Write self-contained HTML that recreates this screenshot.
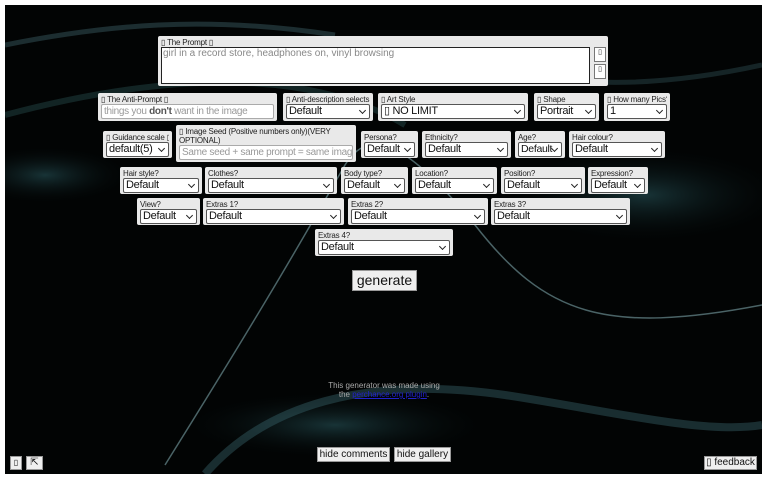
<!DOCTYPE html>
<html><head><meta charset="utf-8"><style>
*{box-sizing:border-box;margin:0;padding:0}
html,body{width:768px;height:480px;background:#fff;overflow:hidden;font-family:"Liberation Sans",sans-serif}
#bg{position:absolute;left:5px;top:5px;width:757px;height:469px;background:#020404;overflow:hidden}
.p{position:absolute;background:#e9e9e9;border-radius:2px;font-size:8px;color:#222;padding:2px 3px}
.p .l{line-height:9px;white-space:nowrap;overflow:hidden;letter-spacing:-0.2px}
.s{display:block;background:#fff;border:1px solid #555;border-radius:2px;height:15px;font-size:11px;line-height:13px;padding:0 2px;position:relative;color:#111;white-space:nowrap;overflow:hidden;letter-spacing:-0.3px}
.s:after{content:"";position:absolute;right:4px;top:3px;width:4px;height:4px;border-right:1.5px solid #222;border-bottom:1.5px solid #222;transform:rotate(45deg);background:#fff}
.s.i:after{display:none}
.b{position:absolute;background:#efefef;border:1px solid #999;font-size:10px;color:#111;text-align:center}
</style></head><body>
<div id="bg">
<svg width="757" height="469" style="position:absolute;left:0;top:0">
<defs>
<radialGradient id="g1" cx="0.5" cy="0.5" r="0.5"><stop offset="0" stop-color="#2a5a60" stop-opacity=".55"/><stop offset="1" stop-color="#000" stop-opacity="0"/></radialGradient>
</defs>
<ellipse cx="640" cy="190" rx="150" ry="50" fill="url(#g1)"/>
<ellipse cx="40" cy="170" rx="90" ry="30" fill="url(#g1)"/>
<ellipse cx="330" cy="420" rx="160" ry="35" fill="url(#g1)"/>
<path d="M160 460 C260 300 300 230 340 160 C370 110 420 160 470 220 C540 310 600 330 757 300" stroke="#6a8c90" stroke-width="1.5" fill="none" opacity=".7"/>
<path d="M0 40 C100 20 200 10 330 30" stroke="#3c6066" stroke-width="5" fill="none" opacity=".45"/>
<path d="M200 469 C260 400 360 370 500 390 C600 405 700 430 757 420" stroke="#3d6c72" stroke-width="8" fill="none" opacity=".4"/>
<path d="M0 110 C150 70 300 60 400 120" stroke="#244" stroke-width="6" fill="none" opacity=".5"/>
<path d="M430 40 C520 80 620 90 757 60" stroke="#2c4c50" stroke-width="5" fill="none" opacity=".45"/>
</svg>
</div>

<div class="p" style="left:158px;top:36px;width:450px;height:50px"><div class="l">▯ The Prompt ▯</div>
<div style="position:absolute;left:3px;top:11px;width:429px;height:37px;background:#fff;border:1px solid #222;font-size:10px;color:#888;padding:0 1px">girl in a record store, headphones on, vinyl browsing</div>
<div style="position:absolute;left:436px;top:11px;width:12px;height:15px;background:#fff;border:1px solid #777;font-size:7px;text-align:center">▯</div>
<div style="position:absolute;left:436px;top:28px;width:12px;height:15px;background:#fff;border:1px solid #777;font-size:7px;text-align:center">▯</div>
</div>

<div class="p" style="left:98px;top:93px;width:179px;height:28px"><div class="l">▯ The Anti-Prompt ▯</div><div class="s i" style="color:#999;font-size:10px;border-color:#aaa">things you <b style="color:#555">don't</b> want in the image</div></div>
<div class="p" style="left:283px;top:93px;width:90px;height:28px"><div class="l">▯ Anti-description selects</div><div class="s">Default</div></div>
<div class="p" style="left:378px;top:93px;width:150px;height:28px"><div class="l">▯ Art Style</div><div class="s">▯ NO LIMIT</div></div>
<div class="p" style="left:534px;top:93px;width:65px;height:28px"><div class="l">▯ Shape</div><div class="s">Portrait</div></div>
<div class="p" style="left:604px;top:93px;width:66px;height:28px"><div class="l">▯ How many Pics?</div><div class="s">1</div></div>

<div class="p" style="left:103px;top:131px;width:69px;height:27px"><div class="l">▯ Guidance scale ▯</div><div class="s">default(5)</div></div>
<div class="p" style="left:176px;top:125px;width:180px;height:37px"><div class="l" style="white-space:normal">▯ Image Seed (Positive numbers only)(VERY OPTIONAL)</div><div class="s i" style="color:#999;font-size:10px;border-color:#aaa">Same seed + same prompt = same imag</div></div>
<div class="p" style="left:361px;top:131px;width:57px;height:27px"><div class="l">Persona?</div><div class="s">Default</div></div>
<div class="p" style="left:422px;top:131px;width:89px;height:27px"><div class="l">Ethnicity?</div><div class="s">Default</div></div>
<div class="p" style="left:515px;top:131px;width:50px;height:27px"><div class="l">Age?</div><div class="s" style="font-size:10.5px">Default</div></div>
<div class="p" style="left:569px;top:131px;width:96px;height:27px"><div class="l">Hair colour?</div><div class="s">Default</div></div>

<div class="p" style="left:120px;top:167px;width:82px;height:27px"><div class="l">Hair style?</div><div class="s">Default</div></div>
<div class="p" style="left:205px;top:167px;width:132px;height:27px"><div class="l">Clothes?</div><div class="s">Default</div></div>
<div class="p" style="left:341px;top:167px;width:67px;height:27px"><div class="l">Body type?</div><div class="s">Default</div></div>
<div class="p" style="left:412px;top:167px;width:85px;height:27px"><div class="l">Location?</div><div class="s">Default</div></div>
<div class="p" style="left:501px;top:167px;width:84px;height:27px"><div class="l">Position?</div><div class="s">Default</div></div>
<div class="p" style="left:588px;top:167px;width:60px;height:27px"><div class="l">Expression?</div><div class="s">Default</div></div>

<div class="p" style="left:137px;top:198px;width:63px;height:27px"><div class="l">View?</div><div class="s">Default</div></div>
<div class="p" style="left:203px;top:198px;width:141px;height:27px"><div class="l">Extras 1?</div><div class="s">Default</div></div>
<div class="p" style="left:348px;top:198px;width:140px;height:27px"><div class="l">Extras 2?</div><div class="s">Default</div></div>
<div class="p" style="left:491px;top:198px;width:139px;height:27px"><div class="l">Extras 3?</div><div class="s">Default</div></div>
<div class="p" style="left:315px;top:229px;width:138px;height:27px"><div class="l">Extras 4?</div><div class="s">Default</div></div>

<div class="b" style="left:352px;top:270px;width:65px;height:21px;font-size:14px;line-height:19px">generate</div>

<div style="position:absolute;left:300px;top:381px;width:168px;text-align:center;font-size:8px;line-height:9px;color:#aaa">This generator was made using<br>the <span style="color:#22c;text-decoration:underline">perchance.org plugin</span>.</div>

<div class="b" style="left:317px;top:447px;width:73px;height:15px;line-height:13px">hide comments</div>
<div class="b" style="left:394px;top:447px;width:57px;height:15px;line-height:13px">hide gallery</div>
<div class="b" style="left:10px;top:456px;width:12px;height:14px;line-height:12px;font-size:8px">▯</div>
<div class="b" style="left:26px;top:456px;width:17px;height:14px;line-height:12px">⇱</div>
<div class="b" style="left:704px;top:456px;width:53px;height:14px;line-height:12px">▯ feedback</div>
</body></html>
